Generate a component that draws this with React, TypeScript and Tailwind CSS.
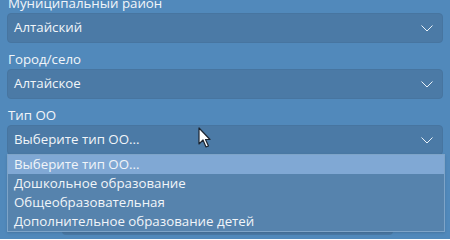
import React from 'react';

const Chevron: React.FC = () => (
  <svg width="14" height="8" viewBox="0 0 14 8" fill="none" className="shrink-0">
    <path d="M1.5 1.5l5.5 5.5 5.5-5.5" stroke="#e9f1f8" strokeWidth="1" />
  </svg>
);

const SelectBox: React.FC<{ value: string }> = ({ value }) => (
  <div className="flex h-[30px] items-center justify-between rounded-[4px] border border-[#4775a0] bg-[#4b7aa6] pl-[6px] pr-[8px]">
    <span>{value}</span>
    <Chevron />
  </div>
);

const options = [
  'Выберите тип ОО...',
  'Дошкольное образование',
  'Общеобразовательная',
  'Дополнительное образование детей',
];

const App: React.FC = () => {
  return (
    <div
      className="relative h-[239px] w-[450px] overflow-hidden bg-[#5189bb] px-[7px] text-[13.3px] text-[#f1f5f9]"
      style={{ fontFamily: '"Open Sans", "Noto Sans", sans-serif' }}
    >
      <div className="mt-[-5px] h-[16px] pl-[1px] leading-[16px]">Муниципальный район</div>
      <div className="mt-[2px]">
        <SelectBox value="Алтайский" />
      </div>

      <div className="mt-[8px] h-[16px] pl-[1px] leading-[16px]">Город/село</div>
      <div className="mt-[2px]">
        <SelectBox value="Алтайское" />
      </div>

      <div className="mt-[8px] h-[16px] pl-[1px] leading-[16px]">Тип ОО</div>
      <div className="relative mt-[2px]">
        <SelectBox value="Выберите тип ОО..." />

        <ul className="absolute left-0 right-[-2px] top-[29px] z-10 border border-[#7ea4c8] bg-[#5683ad] shadow-sm">
          {options.map((o, i) => (
            <li
              key={o}
              className={`h-[19px] pl-[6px] leading-[19px] ${i === 0 ? 'bg-[#80a8d4]' : ''}`}
            >
              {o}
            </li>
          ))}
        </ul>
      </div>

      <div className="ml-[55px] mt-[20px] h-[60px] w-[331px] rounded-[4px] bg-[#4a79a5]" />

      {/* mouse pointer */}
      <svg
        className="absolute left-[198px] top-[127px] z-20"
        width="13"
        height="21"
        viewBox="0 0 13 21"
      >
        <path
          d="M1 1v16l4-4 3 7 2.5-1-3-6.5H12z"
          fill="#ffffff"
          stroke="#1b2430"
          strokeWidth="1.2"
          strokeLinejoin="round"
        />
      </svg>
    </div>
  );
};

export default App;
